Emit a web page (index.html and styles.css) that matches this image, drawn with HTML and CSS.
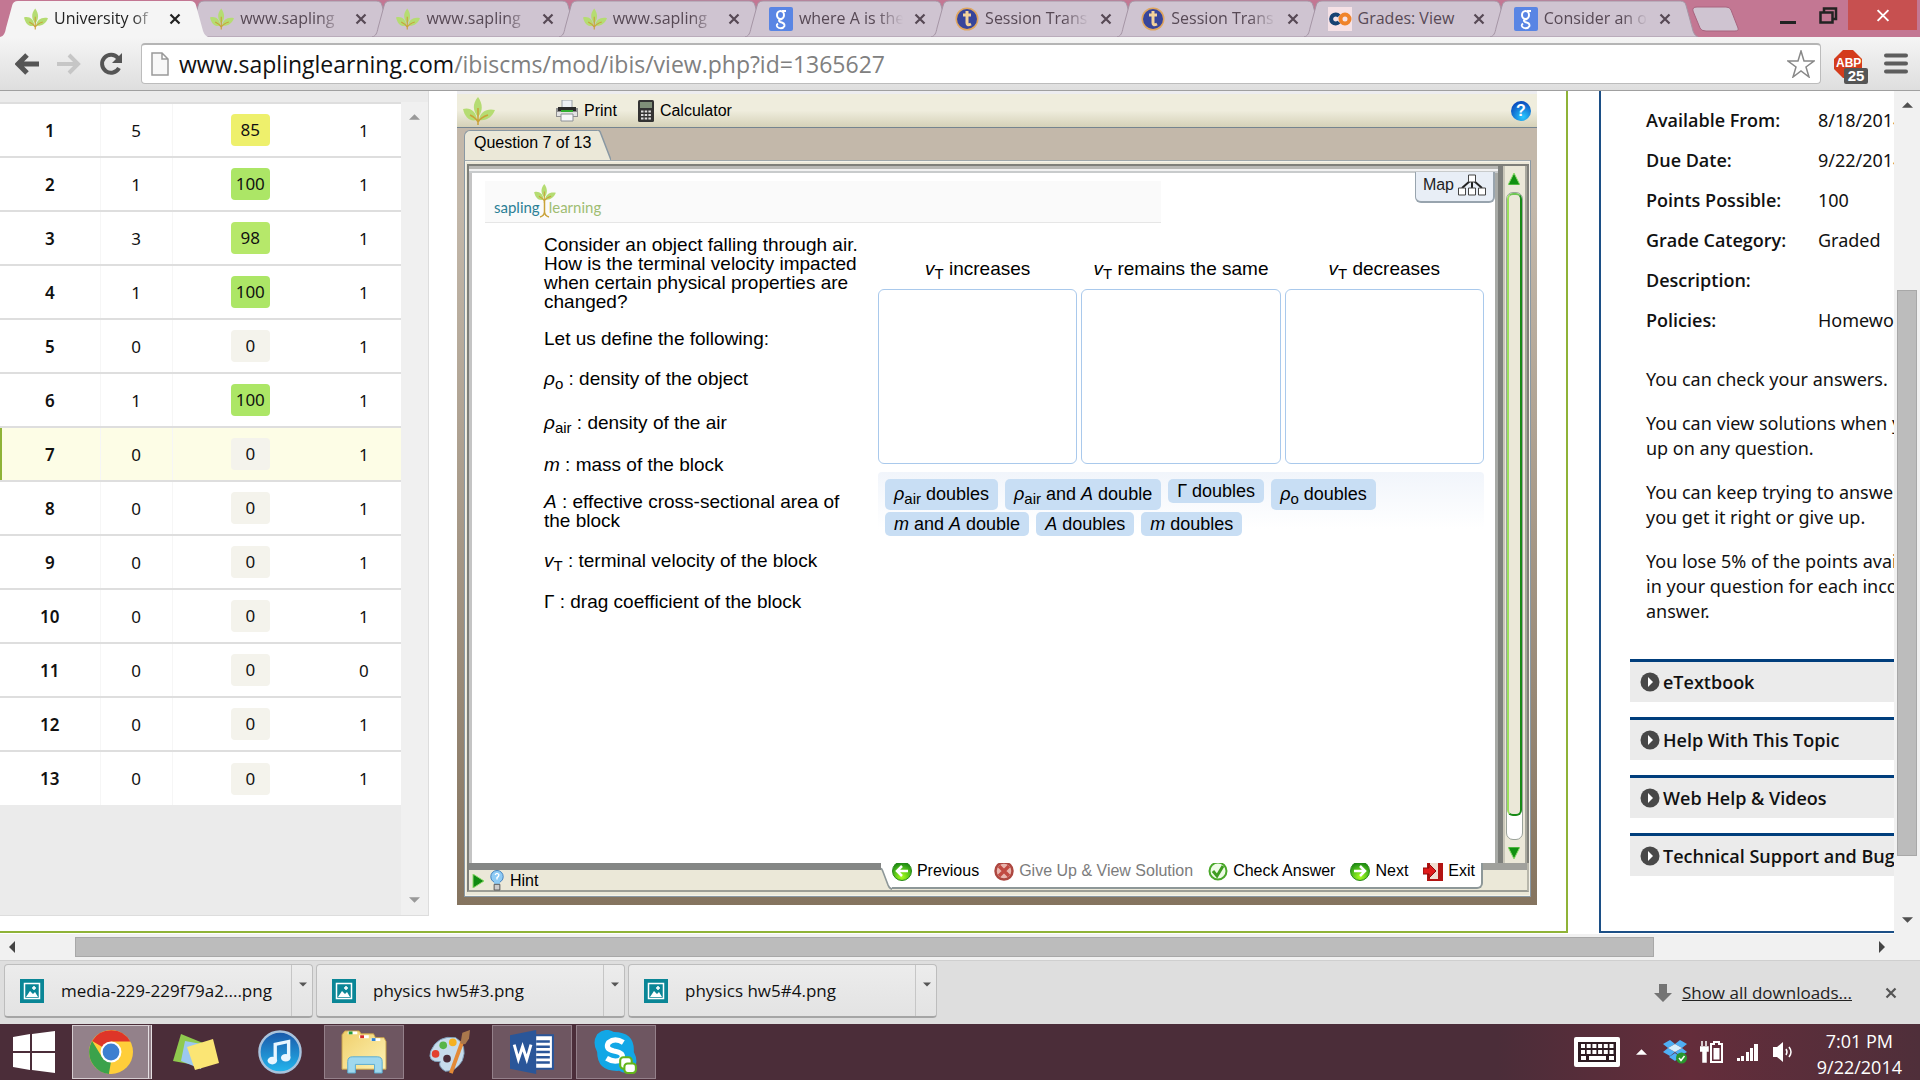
FILE: index.html
```html
<!DOCTYPE html>
<html lang="en">
<head>
<meta charset="utf-8">
<title>Sapling Learning</title>
<link rel="stylesheet" href="styles.css">
</head>
<body>
<svg class="defs" aria-hidden="true">
  <symbol id="tab-shape" viewBox="0 0 208 37" preserveAspectRatio="none"><path d="M0 37C4 36 5 33 6 28L12 6Q13 1 18 1H190Q195 1 196 6L202 28C203 33 205 36 208 37Z" vector-effect="non-scaling-stroke"/></symbol>
  <symbol id="leaf" viewBox="0 0 32 28"><g fill="#b5dc72"><path d="M15 0C9 7 10 14 15 20C20 14 20 7 15 0Z"/><path d="M0 12C7 10 13 14 14 23C6 25 2 20 0 12Z"/><path d="M32 13C24 11 17 15 16 23C24 24 29 20 32 13Z"/></g><path d="M15 11V28M7 18Q13 21 15 25Q18 20 25 18" fill="none" stroke="#c9a238" stroke-width="1.500"/></symbol>
  <symbol id="g-icon" viewBox="0 0 24 24"><rect width="24" height="24" rx="2" fill="#5985e4"/><ellipse cx="11.500" cy="8" rx="3.500" ry="4" fill="none" stroke="#fff" stroke-width="2"/><path d="M13 4H17M13 12Q8 13 11 15Q16 16 15.500 19Q14 22 10 21Q6 19 9 16.500" fill="none" stroke="#fff" stroke-width="1.800"/></symbol>
  <symbol id="t-icon" viewBox="0 0 24 24"><circle cx="12" cy="12" r="11.500" fill="#e0a65e"/><circle cx="12" cy="12" r="10" fill="#37459b"/><path d="M8 8H16M12 4V16Q12 19 16 17" fill="none" stroke="#f3d29b" stroke-width="3"/></symbol>
  <symbol id="grades-icon" viewBox="0 0 24 24"><rect width="24" height="24" fill="#f5e1e6"/><path d="M11 9A4.500 4.500 0 1 0 11 15" fill="none" stroke="#174273" stroke-width="4"/><circle cx="17" cy="12" r="4.500" fill="none" stroke="#f0832b" stroke-width="4"/></symbol>
  <symbol id="x" viewBox="0 0 12 12"><path d="M1.500 1.500L10.500 10.500M10.500 1.500L1.500 10.500" stroke="currentColor" stroke-width="2.200"/></symbol>
  <symbol id="up" viewBox="0 0 12 6"><path d="M0 6L6 0L12 6Z" fill="currentColor"/></symbol>
  <symbol id="down" viewBox="0 0 12 6"><path d="M0 0L6 6L12 0Z" fill="currentColor"/></symbol>
  <symbol id="play" viewBox="0 0 20 20"><circle cx="10" cy="10" r="9.500" fill="#484848"/><path d="M8 5L13 10L8 15Z" fill="#fff"/></symbol>
  <symbol id="picture" viewBox="0 0 24 24"><rect width="24" height="24" fill="#0a8696"/><path d="M4.500 4.500H19.500V19.500H4.500Z" fill="none" stroke="#fff" stroke-width="1.500"/><path d="M6 18L10 12L13 15L15 13L18 18Z" fill="#fff"/><path d="M14 7V11M12 9H16" stroke="#fff" stroke-width="1.500"/></symbol>
  <radialGradient id="green-ball" cx=".5" cy=".8" r=".8"><stop offset="0" stop-color="#a8ff1c"/><stop offset=".6" stop-color="#48b71a"/><stop offset="1" stop-color="#117a13"/></radialGradient>
  <linearGradient id="tunes" x2="0" y2="1"><stop offset="0" stop-color="#1a57a8"/><stop offset="1" stop-color="#24b7ee"/></linearGradient>
  <linearGradient id="folder" x2="1" y2="1"><stop offset="0" stop-color="#f0cf6b"/><stop offset="1" stop-color="#fdf2b4"/></linearGradient>
</svg>

<header class="browser">
  <div class="titlebar">
    <nav class="tabs" aria-label="Browser tabs">
      <div class="tab active"><svg class="shape"><use href="#tab-shape"/></svg><svg class="favicon"><use href="#leaf"/></svg><a href="#">University of</a><button aria-label="Close tab"><svg><use href="#x"/></svg></button></div>
      <div class="tab"><svg class="shape"><use href="#tab-shape"/></svg><svg class="favicon"><use href="#leaf"/></svg><a href="#">www.sapling</a><button aria-label="Close tab"><svg><use href="#x"/></svg></button></div>
      <div class="tab"><svg class="shape"><use href="#tab-shape"/></svg><svg class="favicon"><use href="#leaf"/></svg><a href="#">www.sapling</a><button aria-label="Close tab"><svg><use href="#x"/></svg></button></div>
      <div class="tab"><svg class="shape"><use href="#tab-shape"/></svg><svg class="favicon"><use href="#leaf"/></svg><a href="#">www.sapling</a><button aria-label="Close tab"><svg><use href="#x"/></svg></button></div>
      <div class="tab"><svg class="shape"><use href="#tab-shape"/></svg><svg class="favicon"><use href="#g-icon"/></svg><a href="#">where A is the</a><button aria-label="Close tab"><svg><use href="#x"/></svg></button></div>
      <div class="tab"><svg class="shape"><use href="#tab-shape"/></svg><svg class="favicon"><use href="#t-icon"/></svg><a href="#">Session Trans</a><button aria-label="Close tab"><svg><use href="#x"/></svg></button></div>
      <div class="tab"><svg class="shape"><use href="#tab-shape"/></svg><svg class="favicon"><use href="#t-icon"/></svg><a href="#">Session Trans</a><button aria-label="Close tab"><svg><use href="#x"/></svg></button></div>
      <div class="tab whole"><svg class="shape"><use href="#tab-shape"/></svg><svg class="favicon"><use href="#grades-icon"/></svg><a href="#">Grades: View</a><button aria-label="Close tab"><svg><use href="#x"/></svg></button></div>
      <div class="tab"><svg class="shape"><use href="#tab-shape"/></svg><svg class="favicon"><use href="#g-icon"/></svg><a href="#">Consider an o</a><button aria-label="Close tab"><svg><use href="#x"/></svg></button></div>
    </nav>
    <button class="new-tab" aria-label="New tab"><svg viewBox="0 0 48 26"><path d="M5 1H34Q38 1 39 4L46 22Q47 25 43 25H14Q9 25 8 22L1 5Q0 1 5 1Z" fill="#cfc4d1" stroke="#a8647f"/></svg></button>
    <div class="window-buttons">
      <button aria-label="Minimize"><svg viewBox="0 0 20 20"><path d="M2 16H18V19H2Z" fill="#222"/></svg></button>
      <button aria-label="Restore"><svg viewBox="0 0 20 20"><path d="M2.500 7.500H14.500V17.500H2.500ZM6 7V3.500H18V14H15" fill="none" stroke="#222" stroke-width="2.500"/></svg></button>
      <button class="close" aria-label="Close"><svg viewBox="0 0 12 12"><path d="M1 1L11 11M11 1L1 11" stroke="#fff" stroke-width="1.800"/></svg></button>
    </div>
  </div>
  <div class="toolbar">
    <button aria-label="Back"><svg viewBox="0 0 24 24"><path d="M24 12H4M12 3L3 12L12 21" fill="none" stroke="#555" stroke-width="5"/></svg></button>
    <button aria-label="Forward"><svg viewBox="0 0 24 24"><path d="M0 12H20M12 3L21 12L12 21" fill="none" stroke="#c6c6c6" stroke-width="4"/></svg></button>
    <button aria-label="Reload"><svg viewBox="0 0 24 24"><path d="M20 16A9 9 0 1 1 19 6" fill="none" stroke="#555" stroke-width="4"/><path d="M23 1V11H13Z" fill="#555"/></svg></button>
    <div class="address">
      <svg class="page-icon" viewBox="0 0 18 24"><path d="M1 1H11L17 7V23H1ZM11 1V7H17" fill="#f8f8f8" stroke="#999" stroke-width="1.500"/></svg>
      <span class="url" role="textbox" aria-label="Address"><b>www.saplinglearning.com</b>/ibiscms/mod/ibis/view.php?id=1365627</span>
      <svg class="star" viewBox="0 0 28 28"><path d="M14 1L17 11L27 11L19 17L22 27L14 21L6 27L9 17L1 11L11 11Z" fill="#fff" stroke="#888" stroke-width="1.500"/></svg>
    </div>
    <button class="abp" aria-label="Adblock Plus"><svg viewBox="0 0 28 28"><path d="M9 0H19L28 9V19L19 28H9L0 19V9Z" fill="#d43c1c"/></svg><span class="abp-text">ABP</span><span class="abp-count">25</span></button>
    <button class="menu" aria-label="Menu"><svg viewBox="0 0 24 22"><path d="M2 2.500H22M2 10.500H22M2 18.500H22" stroke="#5d5d5d" stroke-width="4" stroke-linecap="round"/></svg></button>
  </div>
</header>

<main class="viewport">
  <div class="page">
    <div class="assignment">
      <section class="questions" aria-label="Questions">
        <table>
          <tr><th scope="row">1</th><td>5</td><td><span class="score mid">85</span></td><td>1</td></tr>
          <tr><th scope="row">2</th><td>1</td><td><span class="score full">100</span></td><td>1</td></tr>
          <tr><th scope="row">3</th><td>3</td><td><span class="score high">98</span></td><td>1</td></tr>
          <tr><th scope="row">4</th><td>1</td><td><span class="score full">100</span></td><td>1</td></tr>
          <tr><th scope="row">5</th><td>0</td><td><span class="score">0</span></td><td>1</td></tr>
          <tr><th scope="row">6</th><td>1</td><td><span class="score full">100</span></td><td>1</td></tr>
          <tr class="current"><th scope="row">7</th><td>0</td><td><span class="score">0</span></td><td>1</td></tr>
          <tr><th scope="row">8</th><td>0</td><td><span class="score">0</span></td><td>1</td></tr>
          <tr><th scope="row">9</th><td>0</td><td><span class="score">0</span></td><td>1</td></tr>
          <tr><th scope="row">10</th><td>0</td><td><span class="score">0</span></td><td>1</td></tr>
          <tr><th scope="row">11</th><td>0</td><td><span class="score">0</span></td><td>0</td></tr>
          <tr><th scope="row">12</th><td>0</td><td><span class="score">0</span></td><td>1</td></tr>
          <tr><th scope="row">13</th><td>0</td><td><span class="score">0</span></td><td>1</td></tr>
        </table>
        <div class="list-scroll"><svg><use href="#up"/></svg><svg><use href="#down"/></svg></div>
      </section>

      <section class="app" aria-label="Question">
        <div class="app-toolbar">
          <svg class="app-logo"><use href="#leaf"/></svg>
          <button class="print"><svg viewBox="0 0 22 22"><path d="M6 0H16V8H6Z" fill="#eef1f5" stroke="#9aa1a8"/><path d="M0 8H22V17H0Z" fill="#8e8e8e"/><path d="M2 7H20V11H2Z" fill="#2b2b2b"/><path d="M5 10H17V12H5Z" fill="#2fae2f"/><path d="M1 12H21V16H1Z" fill="#e2e2e2"/><path d="M5 14H17V21H5Z" fill="#f7f7f9" stroke="#8c9096"/></svg>Print</button>
          <button class="calc"><svg viewBox="0 0 16 22"><rect width="16" height="22" rx="1.500" fill="#333"/><path d="M2 2H14V8H2Z" fill="#7f8f78"/><path d="M3 11.500H13M3 15H13M3 18.500H13" stroke="#ddd" stroke-width="2.200" stroke-dasharray="2.500 1.200"/></svg>Calculator</button>
          <button class="help" aria-label="Help"><span>?</span></button>
        </div>
        <div class="app-body">
          <div class="question-tab"><h1>Question 7 of 13</h1><svg viewBox="0 0 14 30" preserveAspectRatio="none"><path d="M0 0Q3 0 4 4L14 30H0Z" fill="#ebe8d8"/><path d="M0 0Q3 0 4 4L14 30" fill="none" stroke="#8998a3" stroke-width="1.500"/></svg></div>
          <div class="panel">
            <div class="stage">
              <div class="content">
                <button class="map">Map <svg viewBox="0 0 28 22"><path d="M4 14L12 7H16L24 14M14 8V14" fill="none" stroke="#222" stroke-width="2"/><path d="M10.500 1H17.500V8H10.500ZM.500 14H7.500V21H.500ZM10.500 14H17.500V21H10.500ZM20.500 14H27.500V21H20.500Z" fill="#fff" stroke="#444"/></svg></button>
                <div class="brand"><span>sapling</span><svg viewBox="0 0 22 34"><use href="#leaf" width="22" height="19"/><path d="M10.500 17V30M6 33Q10 32 10.500 28Q11 32 15 33" fill="none" stroke="#c9a238" stroke-width="1.500"/></svg><em>learning</em></div>
                <div class="problem">
                  <div class="prompt">
                    <p>Consider an object falling through air. How is the terminal velocity impacted when certain physical properties are changed?</p>
                    <p class="define">Let us define the following:</p>
                    <p><i>ρ</i><sub>o</sub> : density of the object</p>
                    <p><i>ρ</i><sub>air</sub> : density of the air</p>
                    <p><i>m</i> : mass of the block</p>
                    <p class="area"><i>A</i> : effective cross-sectional area of the block</p>
                    <p><i>v</i><sub>T</sub> : terminal velocity of the block</p>
                    <p>Γ : drag coefficient of the block</p>
                  </div>
                  <div class="sorting">
                    <div class="bin"><h2><i>v</i><sub>T</sub> increases</h2><div class="drop"></div></div>
                    <div class="bin"><h2><i>v</i><sub>T</sub> remains the same</h2><div class="drop"></div></div>
                    <div class="bin"><h2><i>v</i><sub>T</sub> decreases</h2><div class="drop"></div></div>
                    <div class="bank">
                      <button class="tall"><i>ρ</i><sub>air</sub> doubles</button>
                      <button class="tall"><i>ρ</i><sub>air</sub> and <i>A</i> double</button>
                      <button>Γ doubles</button>
                      <button class="tall"><i>ρ</i><sub>o</sub> doubles</button>
                      <span class="break"></span>
                      <button><i>m</i> and <i>A</i> double</button>
                      <button><i>A</i> doubles</button>
                      <button><i>m</i> doubles</button>
                    </div>
                  </div>
                </div>
              </div>
              <div class="stage-scroll"><svg viewBox="0 0 12 12"><path d="M0 12L6 0L12 12Z" fill="#119111" stroke="#8ddb6c"/></svg><div class="groove"><div class="thumb"></div></div><svg viewBox="0 0 12 12"><path d="M0 0L6 12L12 0Z" fill="#119111" stroke="#8ddb6c"/></svg></div>
            </div>
            <div class="footer">
              <button class="hint"><svg class="arrow" viewBox="0 0 12 14"><path d="M1 0L12 7L1 14Z" fill="#118a11" stroke="#8ddb6c"/></svg><svg class="bulb" viewBox="0 0 14 22"><circle cx="7" cy="7" r="6.500" fill="#8ecbf5" stroke="#3f7fbd"/><path d="M4 11H10V15H4Z" fill="#8ecbf5"/><path d="M5 5Q7 2 9 5Q9 7 7 8V10" fill="none" stroke="#fff" stroke-width="1.500"/><path d="M4 15H10V21H4Z" fill="#ccc" stroke="#555"/></svg>Hint</button>
              <svg class="slant" viewBox="0 0 14 28" preserveAspectRatio="none"><path d="M0 0H14V27Q11 27 9 23L2 8Q1 6 0 6Z" fill="#fff"/><path d="M0 6Q1 6 2 8L9 23Q11 27 14 27" fill="none" stroke="#8d9798" stroke-width="2"/></svg>
              <div class="actions">
                <button><svg viewBox="0 0 20 20"><circle cx="10" cy="10" r="9.500" fill="url(#green-ball)" stroke="#2b8a1b"/><path d="M16 10H6M10 5L5 10L10 15" fill="none" stroke="#fff" stroke-width="2.500"/></svg>Previous</button>
                <button disabled><svg viewBox="0 0 20 20"><circle cx="10" cy="10" r="8.500" fill="#e9b7b0" stroke="#ad4740" stroke-width="2.500"/><path d="M5 5L15 15M15 5L5 15" stroke="#c14a42" stroke-width="3.500"/></svg>Give Up &amp; View Solution</button>
                <button><svg viewBox="0 0 20 20"><circle cx="10" cy="10" r="8.500" fill="#eefbe6" stroke="#4aa82a" stroke-width="2"/><path d="M5 10L9 15L15 5" fill="none" stroke="#3f9d22" stroke-width="3"/></svg>Check Answer</button>
                <button><svg viewBox="0 0 20 20"><circle cx="10" cy="10" r="9.500" fill="url(#green-ball)" stroke="#2b8a1b"/><path d="M4 10H14M10 5L15 10L10 15" fill="none" stroke="#fff" stroke-width="2.500"/></svg>Next</button>
                <button><svg viewBox="0 0 20 20"><path d="M4 0H20V20H4Z" fill="#b31412"/><path d="M7 2H15V18H7Z" fill="#f0ddd0"/><path d="M0 7H6V3L13 10L6 17V13H0Z" fill="#e01b1b" stroke="#8c0d0d"/></svg>Exit</button>
              </div>
              <div class="footer-end"></div>
            </div>
          </div>
        </div>
      </section>
    </div>

    <aside class="details">
      <dl>
        <dt>Available From:</dt><dd>8/18/2014</dd>
        <dt>Due Date:</dt><dd>9/22/2014</dd>
        <dt>Points Possible:</dt><dd>100</dd>
        <dt>Grade Category:</dt><dd>Graded</dd>
        <dt>Description:</dt><dd></dd>
        <dt>Policies:</dt><dd>Homework</dd>
      </dl>
      <div class="policies">
        <p>You can check your answers.</p>
        <p>You can view solutions when you<br>up on any question.</p>
        <p>You can keep trying to answer<br>you get it right or give up.</p>
        <p>You lose 5% of the points available<br>in your question for each incorrect<br>answer.</p>
      </div>
      <div class="links">
        <button><svg><use href="#play"/></svg>eTextbook</button>
        <button><svg><use href="#play"/></svg>Help With This Topic</button>
        <button><svg><use href="#play"/></svg>Web Help &amp; Videos</button>
        <button><svg><use href="#play"/></svg>Technical Support and Bug</button>
      </div>
    </aside>
  </div>
  <div class="vscroll"><svg><use href="#up"/></svg><div class="vtrack"><div class="vthumb"></div></div><svg><use href="#down"/></svg></div>
</main>

<div class="hscroll"><svg viewBox="0 0 6 12"><path d="M6 0L0 6L6 12Z" fill="#444"/></svg><div class="htrack"><div class="hthumb"></div></div><svg viewBox="0 0 6 12"><path d="M0 0L6 6L0 12Z" fill="#444"/></svg></div>

<section class="downloads" aria-label="Downloads">
  <div class="file"><button><svg><use href="#picture"/></svg>media-229-229f79a2....png</button><button class="more" aria-label="Options"><svg><use href="#down"/></svg></button></div>
  <div class="file"><button><svg><use href="#picture"/></svg>physics hw5#3.png</button><button class="more" aria-label="Options"><svg><use href="#down"/></svg></button></div>
  <div class="file"><button><svg><use href="#picture"/></svg>physics hw5#4.png</button><button class="more" aria-label="Options"><svg><use href="#down"/></svg></button></div>
  <div class="show-all"><svg viewBox="0 0 18 18"><path d="M5 0H13V9H18L9 18L0 9H5Z" fill="#747474"/></svg><a href="#">Show all downloads...</a></div>
  <button class="dismiss" aria-label="Close downloads"><svg><use href="#x"/></svg></button>
</section>

<footer class="taskbar">
  <div class="apps">
    <button class="start" aria-label="Start"><svg viewBox="0 0 42 42"><path d="M0 6L17 3V20H0ZM19 3L42 0V20H19ZM0 22H17V39L0 36ZM19 22H42V42L19 39Z" fill="#fff"/></svg></button>
    <button class="open front" aria-label="Chrome"><svg viewBox="0 0 42 42"><circle cx="21" cy="21" r="21" fill="#ffce3a"/><path d="M21 21L3 10.500A21 21 0 0 1 39.500 11H21Z" fill="#de3528"/><path d="M3 10.500L12.500 26L21 30L19 42A21 21 0 0 1 3 10.500Z" fill="#3ba24b"/><circle cx="21" cy="21" r="10" fill="#fff"/><circle cx="21" cy="21" r="8" fill="#3d7fd0"/></svg></button>
    <button aria-label="Sticky Notes"><svg viewBox="0 0 46 42"><path d="M8 3L30 12L22 34L0 30Z" fill="#8fca4e"/><path d="M12 10L34 14L28 38L8 30Z" fill="#9cc8f0"/><path d="M14 16L40 8L46 32L22 39Z" fill="#fbe574"/></svg></button>
    <button aria-label="iTunes"><svg viewBox="0 0 46 46"><circle cx="23" cy="23" r="21.500" fill="url(#tunes)" stroke="#a9c3dd" stroke-width="2.500"/><path d="M18 32V15L32 12V29" fill="none" stroke="#e8f6ff" stroke-width="3.500"/><ellipse cx="15" cy="32" rx="5" ry="4" fill="#e8f6ff"/><ellipse cx="29" cy="29" rx="5" ry="4" fill="#e8f6ff"/></svg></button>
    <button class="open" aria-label="File Explorer"><svg viewBox="0 0 46 46"><path d="M3 1H18L20 4H33L35 8H44L46 12V41H0V5Z" fill="url(#folder)" stroke="#c7a14a"/><path d="M6 3H16M18 7H28M30 10H40" stroke="#fff" stroke-width="3"/><path d="M7 3H11" stroke="#249b3e" stroke-width="3"/><path d="M19 7H23" stroke="#d92c2c" stroke-width="3"/><path d="M31 10H35" stroke="#3383d1" stroke-width="3"/><path d="M6 45V33Q6 28 11 28H37Q42 28 42 33V45H34V36H14V45Z" fill="#9fd8ee" stroke="#5aabd0"/></svg></button>
    <button aria-label="Paint"><svg viewBox="0 0 46 46"><path d="M5 22Q12 5 31 8Q44 16 38 32Q31 44 20 43Q12 38 15 33Q1 34 5 22Z" fill="#c7dcec" stroke="#7d9eba"/><circle cx="10" cy="25" r="4" fill="#e3412e"/><circle cx="18" cy="16" r="4" fill="#57b548"/><circle cx="28" cy="13" r="4" fill="#f5b120"/><circle cx="22" cy="30" r="4" fill="#4b2d39"/><path d="M26 45L38 12" stroke="#e38a37" stroke-width="4"/><path d="M36 14L38 3L46 0L45 9L41 15Z" fill="#a9774c"/></svg></button>
    <button class="open" aria-label="Word"><svg viewBox="0 0 42 42"><path d="M20 5H41V37H20Z" fill="#fff" stroke="#2a5699" stroke-width="2"/><path d="M25 11H38M25 16H38M25 21H38M25 26H38M25 31H38" stroke="#2a5699" stroke-width="2.500"/><path d="M0 5L25 0V42L0 37Z" fill="#2a5699"/><path d="M4 14L8 28L12 16L16 28L20 14" fill="none" stroke="#fff" stroke-width="2.800"/></svg></button>
    <button class="open" aria-label="Skype"><svg viewBox="0 0 42 42"><path d="M3 4Q11-3 19 2Q39 2 38 21Q43 30 38 38Q31 43 24 39Q3 40 3 21Q-2 12 3 4Z" fill="#12a7e6"/><path d="M28 12Q20 7 14 12Q10 18 19 20Q30 22 26 28Q20 32 12 27" fill="none" stroke="#fff" stroke-width="5"/><rect x="25" y="26" width="11" height="11" rx="3" fill="#fff" stroke="#63b51b" stroke-width="2"/><rect x="29" y="32" width="11" height="9" rx="3" fill="#fff" stroke="#63b51b" stroke-width="2"/></svg></button>
  </div>
  <div class="tray">
    <svg class="keyboard" viewBox="0 0 46 30"><rect width="46" height="30" rx="2" fill="#fff"/><path d="M4 5H42V25H4Z" fill="#2d1b22"/><path d="M7 9H40M7 15H40" stroke="#fff" stroke-width="4" stroke-dasharray="4 1.700"/><path d="M7 21H12M15 21H32M35 21H40" stroke="#fff" stroke-width="4"/></svg>
    <svg class="chevron"><use href="#up"/></svg>
    <svg class="dropbox" viewBox="0 0 24 24"><path d="M7 0L12 4L5 8L0 4ZM17 0L24 4L19 8L12 4ZM5 8L12 12L7 16L0 12ZM19 8L24 12L17 16L12 12ZM12 13L17 17L12 21L6 17Z" fill="#4fb0f5"/><path d="M12 4L19 8L12 12L5 8Z" fill="#d9effc"/><circle cx="18.500" cy="18" r="5.500" fill="#29962c"/><path d="M16 18L18 20.500L21.500 16" fill="none" stroke="#fff" stroke-width="1.500"/></svg>
    <svg class="battery" viewBox="0 0 24 24"><path d="M2 1V6M6 1V6M0 7H8V11H6V22H3V11H0Z" stroke="#fff" fill="#fff" stroke-width="1.500"/><path d="M11 4H14V2H19V4H22V22H11Z" fill="none" stroke="#fff" stroke-width="2"/><path d="M13.500 8H19.500V19.500H13.500Z" fill="#fff"/></svg>
    <svg class="signal" viewBox="0 0 22 18"><path d="M0 18V15H3V18ZM4 18V13H7V18ZM9 18V9H12V18ZM13 18V5H16V18ZM17 18V1H21V18Z" fill="#fff"/></svg>
    <svg class="speaker" viewBox="0 0 22 22"><path d="M0 6H4L10 1V21L4 16H0Z" fill="#fff"/><path d="M13 8Q15 11 13 14M16 6Q20 11 16 16" fill="none" stroke="#fff" stroke-width="1.500"/></svg>
    <div class="clock"><time>7:01 PM</time><time>9/22/2014</time></div>
  </div>
</footer>
</body>
</html>
```

FILE: styles.css
```css
* { box-sizing: border-box; }

body {
  margin: 0;
  min-height: 100vh;
  display: flex;
  flex-direction: column;
  font-family: "Noto Sans", "Open Sans", sans-serif;
  font-size: 17px;
  line-height: 25px;
  color: #111;
  background: #fff;
}

button {
  margin: 0;
  padding: 0;
  border: 0;
  background: none;
  font: inherit;
  color: inherit;
}

svg { display: block; flex: none; }
.defs { position: absolute; width: 0; height: 0; }

/* Browser window */
.browser { font-family: "Open Sans", sans-serif; }
.titlebar { display: flex; height: 37px; background: #c37793; }
.tabs { flex: 1; display: grid; grid-template-columns: repeat(9, 1fr); }
.tab {
  position: relative;
  display: flex;
  align-items: center;
  gap: 6px;
  min-width: 0;
  padding: 0 0 0 24px;
  color: #574955;
}
.tab .shape {
  position: absolute;
  left: 0;
  top: 0;
  width: calc(100% + 22px);
  height: 37px;
  fill: #cfc4d1;
  stroke: #a595a5;
}
.tab.active { z-index: 2; color: #222; }
.tab.active .shape { fill: #f5f5f5; stroke: none; }
.tab .favicon { position: relative; width: 24px; height: 24px; }
.tab a {
  position: relative;
  flex: 1;
  min-width: 0;
  overflow: hidden;
  white-space: nowrap;
  color: inherit;
  text-decoration: none;
  font-size: 16px;
  mask-image: linear-gradient(to right, #000 75%, transparent);
}
.tab.whole a { mask-image: none; }
.tab button { position: relative; padding: 5px; }
.tab button svg { width: 12px; height: 12px; }
.new-tab { padding-left: 16px; }
.new-tab svg { width: 48px; height: 26px; }
.window-buttons { display: flex; align-items: flex-start; padding: 0 3px 0 28px; }
.window-buttons button { display: flex; width: 40px; height: 30px; align-items: center; justify-content: center; }
.window-buttons svg { width: 20px; height: 20px; }
.window-buttons .close { width: 69px; background: #c75050; }
.window-buttons .close svg { width: 14px; height: 13px; }

.toolbar {
  display: flex;
  align-items: center;
  gap: 18px;
  height: 54px;
  padding: 0 12px 0 15px;
  background: linear-gradient(#f5f5f5, #dedede);
  border-bottom: 1px solid #a0a0a0;
}
.toolbar > button svg { width: 24px; height: 24px; }
.address {
  flex: 1;
  display: flex;
  align-items: center;
  gap: 10px;
  height: 41px;
  padding: 0 5px 0 9px;
  background: #fff;
  border: 1px solid #bcbcbc;
  border-top: 2px solid #b5b5b5;
  border-radius: 4px;
}
.url { flex: 1; font-size: 23px; line-height: 32px; color: #808080; }
.url b { font-weight: 400; color: #111; }
.page-icon { width: 18px; height: 24px; }
.star { width: 28px; height: 28px; }
.toolbar .abp { position: relative; margin: 0 4px 0 -5px; }
.toolbar .abp svg { width: 28px; height: 28px; }
.abp-text { position: absolute; left: 2px; top: 2px; width: 24px; font: bold 12px/22px "Liberation Sans", sans-serif; color: #fff; text-align: center; }
.abp-count { position: absolute; left: 10px; top: 18px; width: 24px; border-radius: 2px; background: #555; font: bold 15px/16px "Liberation Sans", sans-serif; color: #fff; }
.toolbar .menu svg { width: 24px; height: 22px; }

/* Page area */
.viewport { flex: 1; display: flex; }
.page { flex: 1; min-width: 0; display: flex; gap: 31px; padding-bottom: 1px; }
.assignment {
  flex: 1;
  display: flex;
  gap: 28px;
  padding-right: 29px;
  border-right: 2px solid #8fb338;
  border-bottom: 2px solid #8fb338;
}

.questions {
  display: flex;
  align-items: stretch;
  width: 429px;
  margin-bottom: 15px;
  padding-top: 11px;
  background: #ebebeb;
  border-right: 1px solid #ddd;
  border-bottom: 1px solid #ddd;
}
.questions table { align-self: flex-start; width: 401px; border-collapse: collapse; table-layout: fixed; background: #fff; }
.questions tr { height: 54px; border-top: 2px solid #dedede; }
.questions th, .questions td { padding: 0; text-align: center; font-weight: 400; }
.questions th { width: 100px; font-weight: 600; }
.questions td:nth-child(2) { width: 72px; border-left: 1px solid #f6f6f6; border-right: 1px solid #f6f6f6; }
.questions td:nth-child(3) { width: 156px; }
.questions td:nth-child(4) { text-align: left; padding-left: 31px; }
.questions .current { background: #fdfde6; box-shadow: inset 2px 0 #8fb338; }
.score { display: inline-block; width: 39px; border-radius: 4px; line-height: 32px; background: #f4f3ec; }
.score.full { background: #ace666; }
.score.high { background: #b6e86a; }
.score.mid { background: #eef06c; }
.list-scroll, .vscroll { display: flex; flex-direction: column; align-items: center; justify-content: space-between; background: #f0f0f0; color: #999; }
.list-scroll { flex: 1; padding: 12px 0; }
.list-scroll svg, .vscroll svg { width: 11px; height: 6px; }

/* Question player */
.app { flex: 1; min-width: 0; display: flex; flex-direction: column; margin-bottom: 26px; font: 16px/20px "Liberation Sans", sans-serif; color: #000; }
.app button { display: flex; align-items: center; gap: 6px; }
.app-toolbar {
  display: flex;
  align-items: center;
  gap: 21px;
  height: 37px;
  padding: 0 6px;
  background: linear-gradient(#efeddd 50%, #d5d1b8);
  border-top: 3px solid #ededf0;
  border-bottom: 1px solid #75848f;
}
.app-logo { width: 32px; height: 28px; }
.print { margin-left: 40px; }
.print svg { width: 22px; height: 22px; }
.calc svg { width: 16px; height: 22px; }
.app .help { margin-left: auto; justify-content: center; width: 20px; height: 20px; border-radius: 50%; background: radial-gradient(circle at 60% 80%, #28c8ff, #0a4fc0 75%); color: #fff; font-weight: 700; }

.app-body { flex: 1; display: flex; flex-direction: column; padding: 2px 6px 8px 7px; background: linear-gradient(#c3b8aa 10%, #85745f); }
.question-tab { display: flex; height: 30px; }
.question-tab h1 { margin: 0; padding: 2px 6px 0 9px; background: #ebe8d8; border: 1px solid #8998a3; border-width: 1px 0 0 1px; border-radius: 6px 0 0 0; font-size: 16px; font-weight: 400; }
.question-tab svg { width: 14px; height: 30px; }
.panel { flex: 1; display: flex; flex-direction: column; padding: 3px 1px 4px 2px; background: #ebe8d8; border: 1px solid #8998a3; border-top-color: #9fa8ab; box-shadow: inset 0 0 0 1px #f4f2e8; }
.stage { flex: 1; display: flex; border: 2px solid #7e7f79; border-bottom: 0; }
.content {
  position: relative;
  flex: 1;
  min-width: 0;
  padding: 15px 11px 0 16px;
  background: #fff;
  box-shadow: inset 0 3px #b8b8b4, inset 0 5px #f2f2f2, inset 0 7px #c8cbcc, inset 3px 0 #c4c4c4, inset -3px 0 #a8aaa6;
}
.app .map { position: absolute; right: 3px; top: 6px; height: 31px; padding: 0 7px 4px; gap: 4px; background: #e8eef6; border: solid #98a4ae; border-width: 0 2px 2px 1px; border-radius: 0 0 6px 6px; color: #222; }
.map svg { width: 28px; height: 22px; }
.brand { display: flex; align-items: flex-end; height: 42px; max-width: 676px; padding: 0 9px 4px; background: #fafafa; border-bottom: 1px solid #e6e6e6; font: 15px/22px Lato, sans-serif; color: #2b7f96; }
.brand svg { width: 22px; height: 34px; margin: 0 -8px 0 -6px; }
.brand em { font-style: normal; color: #9fbd72; margin-left: 1px; }
.problem { display: flex; padding: 10px 3px 0 59px; font-size: 19px; line-height: 19px; }
.prompt { width: 334px; padding: 2px 10px 0 0; }
.prompt p { margin: 0 0 22px; }
.prompt .define { margin: 0 0 21px; }
.prompt p:nth-child(1) { margin-bottom: 18px; }
.prompt p:nth-child(3) { margin-bottom: 25px; }
.prompt p:nth-child(4) { margin-bottom: 23px; }
.prompt .area { margin-bottom: 21px; }
.prompt p:nth-child(5) { margin-bottom: 18px; }
sub { font-size: 15px; line-height: 0; vertical-align: -4px; }
.sorting { flex: 1; display: grid; grid-template-columns: repeat(3, 1fr); align-content: start; column-gap: 4px; }
.bin h2 { margin: 0; padding: 26px 0 0; height: 56px; font-size: 19px; font-weight: 400; text-align: center; }
.drop { height: 175px; border: 1px solid #a9c9ec; border-radius: 6px; }
.bank { grid-column: 1 / -1; display: flex; flex-wrap: wrap; align-items: flex-start; gap: 1px 7px; margin-top: 8px; padding: 7px; background: linear-gradient(#f1f5fb, #fff 80%); border-radius: 4px; font-size: 18px; }
.app .bank button { display: block; height: 24px; padding: 0 9px; background: #c8def4; border-radius: 5px; white-space: nowrap; }
.app .bank .tall { height: 31px; }
.break { flex-basis: 100%; }

.stage-scroll { display: flex; flex-direction: column; align-items: center; gap: 7px; width: 29px; padding: 7px 0 4px; background: #ebe8d8; border-left: 5px solid #7e807c; border-right: 2px solid #a8a89e; box-shadow: inset 2px 0 #c8c6b8; }
.stage-scroll > svg { width: 12px; height: 12px; }
.groove { flex: 1; width: 17px; padding-bottom: 23px; border: 1px solid #9aa29a; border-radius: 7px; background: #fff; }
.thumb { height: 100%; border: 2px solid #178a17; border-left-color: #9be05c; border-top-color: #6fc653; border-radius: 6px; background: #ebe8d8; }

.footer { display: flex; height: 29px; border-left: 2px solid #7e7f79; border-right: 2px solid #b8b7ab; border-bottom: 2px solid #9c9d95; }
.footer .hint { flex: 1; padding: 1px 0 0 3px; background: #ebe8d8; border-top: 7px solid #848685; }
.hint .arrow { width: 12px; height: 14px; }
.hint .bulb { width: 14px; height: 21px; }
.slant { width: 11px; height: 27px; background: #ebe8d8; }
.actions { display: flex; align-items: center; gap: 15px; height: 26px; padding: 0 6px 8px 0; background: #fff; border-right: 2px solid #8d9798; border-bottom: 2px solid #8d9798; border-radius: 0 0 6px 0; }
.actions button { white-space: nowrap; }
.app .actions button { gap: 5px; }
.actions button:disabled { color: #7c7c7c; }
.actions svg { width: 20px; height: 20px; }
.footer-end { width: 44px; border-top: 7px solid #a0a19c; background: #ebe8d8; }

/* Assignment details */
.details { width: 295px; overflow: hidden; padding: 9px 0 0 45px; border-left: 2px solid #1c4f86; border-bottom: 2px solid #1c4f86; white-space: nowrap; font-size: 18px; }
.details dl { display: grid; grid-template-columns: 172px 1fr; margin: 0; line-height: 40px; }
.details dt, .links button { font-family: "Open Sans", sans-serif; font-weight: 600; }
.details dd { margin: 0; min-height: 40px; }
.policies { padding-top: 27px; }
.policies p { margin: 0 0 19px; }
.links { display: flex; flex-direction: column; gap: 15px; margin: 35px 0 0 -16px; }
.links button { display: flex; align-items: center; gap: 3px; height: 43px; padding-left: 10px; border-top: 3px solid #003e7c; background: #ebebeb; }
.links svg { width: 20px; height: 20px; }

.vscroll { width: 26px; padding: 11px 0; background: #f1f1f1; color: #505050; }
.vtrack { flex: 1; width: 20px; padding: 182px 0 61px; }
.vthumb { height: 100%; background: #bcbcbc; border: 1px solid #a8a8a8; }
.hscroll { display: flex; align-items: center; height: 26px; padding: 0 35px 0 9px; background: #f1f1f1; }
.hscroll svg { width: 6px; height: 12px; }
.htrack { flex: 1; padding: 0 225px 0 60px; }
.hthumb { height: 20px; background: #bcbcbc; border: 1px solid #a8a8a8; }

/* Downloads */
.downloads { display: flex; align-items: center; gap: 3px; height: 64px; padding: 0 23px 0 4px; background: #dedede; border-top: 1px solid #cfcfcf; font: 17px/24px "Open Sans", sans-serif; }
.file { display: flex; width: 309px; height: 54px; margin-bottom: 3px; background: linear-gradient(#ececec, #e3e3e3); border: 1px solid #bdbdbd; border-bottom: 2px solid #a5a5a5; border-radius: 4px; }
.file button { flex: 1; display: flex; align-items: center; gap: 17px; padding-left: 15px; white-space: nowrap; }
.file button svg { width: 24px; height: 24px; }
.file .more { flex: none; width: 21px; padding: 0 0 12px 7px; border-left: 1px solid #c6c6c6; color: #555; }
.file .more svg { width: 8px; height: 5px; }
.show-all { display: flex; align-items: center; gap: 10px; margin-left: auto; }
.show-all svg { width: 18px; height: 18px; }
.show-all a { color: #222; }
.dismiss { margin-left: 30px; color: #555; }
.dismiss svg { width: 12px; height: 12px; }

/* Taskbar */
.taskbar { display: flex; justify-content: space-between; height: 56px; background: linear-gradient(90deg, #4b2d39 78%, #642d3b 88%, #4f2f3a); color: #fff; }
.apps { display: flex; gap: 4px; padding: 1px 0; }
.apps button { display: flex; align-items: center; justify-content: center; width: 80px; }
.apps svg { width: 46px; height: 44px; }
.apps .start { width: 68px; }
.apps .start svg { width: 42px; height: 42px; }
.apps .open { background: #6e5661; border: 1px solid #94808a; }
.apps .front { background: #93818a; border-color: #d5ccd0; border-right: 4px double #e5dfe2; }
.tray { display: flex; align-items: center; padding-right: 18px; }
.keyboard { width: 46px; height: 30px; margin-right: 16px; }
.chevron { width: 11px; height: 6px; margin-right: 16px; }
.dropbox, .battery { width: 24px; height: 24px; margin-right: 13px; }
.signal { width: 22px; height: 18px; margin-right: 14px; }
.speaker { width: 22px; height: 22px; margin-right: 22px; }
.clock { display: flex; flex-direction: column; align-items: center; font: 18px/26px "Open Sans", sans-serif; padding-top: 4px; }
```
